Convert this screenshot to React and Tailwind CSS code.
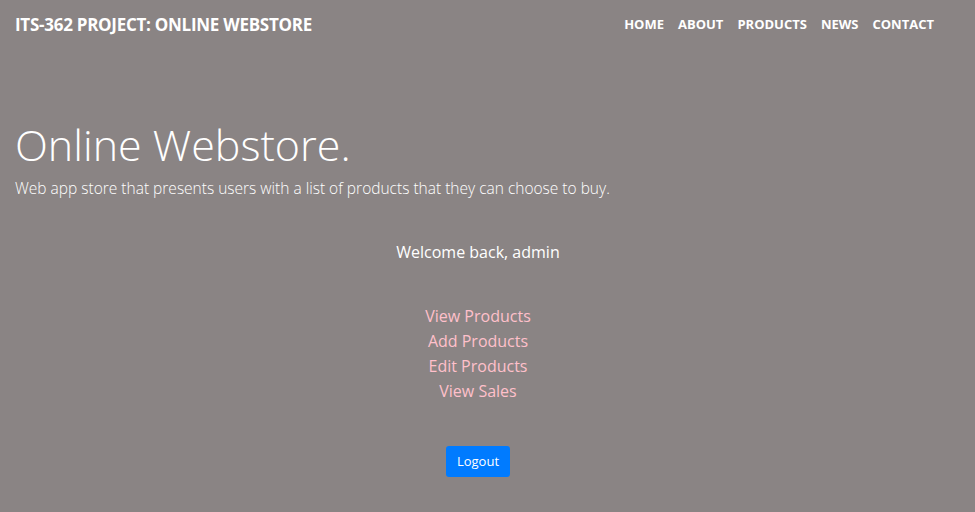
import React from 'react';

const NAV = ['HOME', 'ABOUT', 'PRODUCTS', 'NEWS', 'CONTACT'];
const LINKS = ['View Products', 'Add Products', 'Edit Products', 'View Sales'];

export default function App() {
  return (
    <div className="min-h-[512px] w-[975px] bg-[#8a8484] text-white font-['Open_Sans',sans-serif]">
      {/* Navbar */}
      <nav className="flex items-center justify-between pl-[15px] pr-[41px] h-[49px]">
        <span className="text-[17px] font-bold tracking-[-0.27px]">ITS-362 PROJECT: ONLINE WEBSTORE</span>
        <ul className="flex gap-[14px] text-[13px] font-bold">
          {NAV.map((n) => (
            <li key={n}>{n}</li>
          ))}
        </ul>
      </nav>

      {/* Jumbotron */}
      <div className="px-[15px] pt-[66px]">
        <h1 className="text-[43px] font-light leading-[60px]">Online Webstore.</h1>
        <p className="text-[15.5px] font-light leading-[24px] mt-[1px]">
          Web app store that presents users with a list of products that they can choose to buy.
        </p>
      </div>

      <div className="flex flex-col items-center w-[956px]">
        <p className="mt-[40px] text-[16px] leading-[24px]">Welcome back, admin</p>
        <div className="mt-[40px] flex flex-col items-center text-[16px] leading-[25px] text-[#ffc0cb]">
          {LINKS.map((l) => (
            <a key={l} href="#">{l}</a>
          ))}
        </div>
        <button className="mt-[42px] h-[31px] px-[11px] rounded-[3px] bg-[#007bff] text-[13px]">Logout</button>
      </div>
    </div>
  );
}
